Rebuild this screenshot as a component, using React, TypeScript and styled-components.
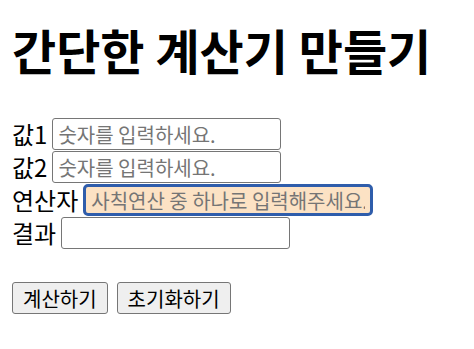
import React from "react";
import styled, { createGlobalStyle } from "styled-components";

const Global = createGlobalStyle`
  body {
    margin: 12px;
    font-family: "Noto Sans CJK KR", "Noto Sans", sans-serif;
    font-size: 24px;
    color: #000;
    background: #fff;
  }
`;

const Title = styled.h1`
  font-size: 48px;
  font-weight: 700;
  margin: 2px 0 34px;
  line-height: 70px;
`;

const Form = styled.div`
  display: flex;
  flex-direction: column;
  gap: 1px;
`;

const Row = styled.div`
  display: flex;
  align-items: center;
  gap: 5px;
  height: 32px;
  line-height: 32px;
`;

const Label = styled.span`
  font-size: 24px;
`;

const Field = styled.input<{ $active?: boolean; $wide?: boolean }>`
  box-sizing: border-box;
  width: ${(p) => (p.$wide ? "290px" : "229px")};
  height: 32px;
  font-family: "Noto Sans CJK KR", "Noto Sans", sans-serif;
  font-size: 20px;
  padding: 0 5px;
  border: ${(p) => (p.$active ? "3px solid #2f5dab" : "1.5px solid #767676")};
  border-radius: ${(p) => (p.$active ? "5px" : "3px")};
  background: ${(p) => (p.$active ? "#fce2c4" : "#fff")};
  color: #000;
  outline: none;
  &::placeholder {
    color: #757575;
  }
`;

const Buttons = styled.div`
  display: flex;
  gap: 9px;
  margin-top: 33px;
`;

const Button = styled.button`
  box-sizing: border-box;
  height: 32px;
  padding: 0 10px;
  font-family: "Noto Sans CJK KR", "Noto Sans", sans-serif;
  font-size: 20px;
  font-weight: 400;
  background: #efefef;
  border: 1.5px solid #767676;
  border-radius: 3px;
  color: #000;
`;

export default function App() {
  return (
    <>
      <Global />
      <Title>간단한 계산기 만들기</Title>
      <Form>
        <Row>
          <Label>값1</Label>
          <Field placeholder="숫자를 입력하세요." />
        </Row>
        <Row>
          <Label>값2</Label>
          <Field placeholder="숫자를 입력하세요." />
        </Row>
        <Row>
          <Label>연산자</Label>
          <Field $active $wide autoFocus placeholder="사칙연산 중 하나로 입력해주세요." />
        </Row>
        <Row>
          <Label>결과</Label>
          <Field />
        </Row>
      </Form>
      <Buttons>
        <Button>계산하기</Button>
        <Button>초기화하기</Button>
      </Buttons>
    </>
  );
}
